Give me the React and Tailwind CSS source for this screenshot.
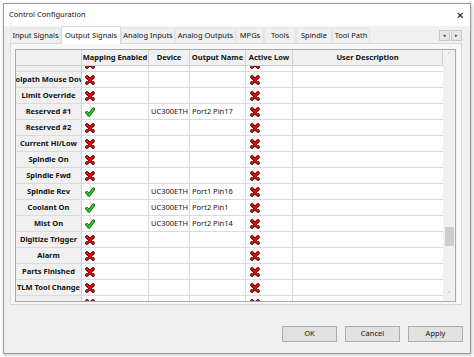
import React from "react";

const tabs = [
  { label: "Input Signals", w: "w-[51px]" },
  { label: "Output Signals", w: "w-[60px]", active: true },
  { label: "Analog Inputs", w: "w-[54px]" },
  { label: "Analog Outputs", w: "w-[61px]" },
  { label: "MPGs", w: "w-[28px]" },
  { label: "Tools", w: "w-[32px]" },
  { label: "Spindle", w: "w-[36px]" },
  { label: "Tool Path", w: "w-[38px]" },
];

const rows = [
  { name: "Dwell", on: false },
  { name: "Toolpath Mouse Down", on: false },
  { name: "Limit Override", on: false },
  { name: "Reserved #1", on: true, device: "UC300ETH", out: "Port2 Pin17" },
  { name: "Reserved #2", on: false },
  { name: "Current Hi/Low", on: false },
  { name: "Spindle On", on: false },
  { name: "Spindle Fwd", on: false },
  { name: "Spindle Rev", on: true, device: "UC300ETH", out: "Port1 Pin16" },
  { name: "Coolant On", on: true, device: "UC300ETH", out: "Port2 Pin1" },
  { name: "Mist On", on: true, device: "UC300ETH", out: "Port2 Pin14" },
  { name: "Digitize Trigger", on: false },
  { name: "Alarm", on: false },
  { name: "Parts Finished", on: false },
  { name: "TLM Tool Change", on: false },
  { name: "Probe Output", on: false },
];

const RedX = () => (
  <svg width="10" height="10" viewBox="0 0 10 10">
    <path d="M2 2 L8 8 M8 2 L2 8" stroke="#3a0000" strokeWidth="3.6" strokeLinecap="round" />
    <path d="M2 2 L8 8 M8 2 L2 8" stroke="#d81010" strokeWidth="2.2" strokeLinecap="round" />
  </svg>
);

const GreenCheck = () => (
  <svg width="10" height="10" viewBox="0 0 10 10">
    <path d="M1.8 5.6 L4 8 L8.6 2" fill="none" stroke="#0a4a0a" strokeWidth="3.2" strokeLinejoin="round" strokeLinecap="round" />
    <path d="M1.8 5.6 L4 8 L8.6 2" fill="none" stroke="#2fd02f" strokeWidth="1.8" strokeLinejoin="round" strokeLinecap="round" />
  </svg>
);

const Row = ({ r }) => (
  <div className="flex h-[16px] border-b border-[#dadada]">
    <div className="w-[66px] shrink-0 bg-[#f0f0f0] border-r border-[#d0d0d0] flex justify-center items-center overflow-hidden whitespace-nowrap font-bold">
      <span className="shrink-0">{r.name}</span>
    </div>
    <div className="w-[67px] shrink-0 border-r border-[#d8d8d8] flex items-center pl-[3px]">
      {r.on ? <GreenCheck /> : <RedX />}
    </div>
    <div className="w-[41px] shrink-0 border-r border-[#d8d8d8] flex items-center pl-[2px] whitespace-nowrap">{r.device}</div>
    <div className="w-[56px] shrink-0 border-r border-[#d8d8d8] flex items-center pl-[2px] whitespace-nowrap">{r.out}</div>
    <div className="w-[47px] shrink-0 border-r border-[#d8d8d8] flex items-center pl-[4px]">
      <RedX />
    </div>
    <div className="flex-1" />
  </div>
);

export default function App() {
  return (
    <div className="w-[474px] h-[357px] bg-white pt-[3px] pl-[3px] text-[7.5px] text-[#111]" style={{ fontFamily: '"Noto Sans", sans-serif' }}>
      <div className="w-[468px] h-[351px] border border-[#9a9a9a] bg-[#f0f0f0] flex flex-col shadow-[1px_1px_3px_rgba(0,0,0,0.25)]">
        {/* title bar */}
        <div className="h-[22px] bg-white flex items-center justify-between pl-[5px] pr-[6px]">
          <span className="text-[7.5px]">Control Configuration</span>
          <span className="text-[10px] font-light">✕</span>
        </div>

        {/* tabs */}
        <div className="flex items-end h-[17px] pl-[6px] pr-[8px]">
          {tabs.map((t) =>
            t.active ? (
              <div key={t.label} className={`${t.w} h-[18px] bg-white border border-b-0 border-[#d9d9d9] flex items-center justify-center whitespace-nowrap -mb-px relative z-10`}>
                {t.label}
              </div>
            ) : (
              <div key={t.label} className={`${t.w} h-[15px] border-t border-x border-[#e4e4e4] flex items-center justify-center whitespace-nowrap`}>
                {t.label}
              </div>
            )
          )}
          <div className="flex-1" />
          <div className="flex mb-[2px] gap-px">
            <div className="w-[11px] h-[11px] border border-[#c8c8c8] bg-[#e6e6e6] flex items-center justify-center text-[5px] text-[#333]">◂</div>
            <div className="w-[11px] h-[11px] border border-[#c8c8c8] bg-[#e6e6e6] flex items-center justify-center text-[5px] text-[#333]">▸</div>
          </div>
        </div>

        {/* panel */}
        <div className="ml-[6px] w-[452px] h-[262px] border border-[#d9d9d9] bg-[#f7f7f7] pt-[5px] pl-[4px] pr-[5px]">
          <div className="flex h-[253px] border border-[#a8a8a8] bg-white">
            <div className="flex-1 flex flex-col overflow-hidden">
              {/* header */}
              <div className="flex h-[16px] shrink-0 border-b border-[#cfcfcf] bg-[#f0f0f0] font-bold">
                <div className="w-[66px] shrink-0 border-r border-[#d0d0d0]" />
                <div className="w-[67px] shrink-0 border-r border-[#d0d0d0] flex items-center justify-center">Mapping Enabled</div>
                <div className="w-[41px] shrink-0 border-r border-[#d0d0d0] flex items-center justify-center">Device</div>
                <div className="w-[56px] shrink-0 border-r border-[#d0d0d0] flex items-center justify-center whitespace-nowrap">Output Name</div>
                <div className="w-[47px] shrink-0 border-r border-[#d0d0d0] flex items-center justify-center">Active Low</div>
                <div className="flex-1 border-r border-[#d0d0d0] flex items-center justify-center">User Description</div>
              </div>
              {/* scrolled body */}
              <div className="flex-1 overflow-hidden">
                <div className="-mt-[10px]">
                  {rows.map((r) => (
                    <Row key={r.name} r={r} />
                  ))}
                </div>
              </div>
            </div>
            {/* scrollbar */}
            <div className="w-[12px] shrink-0 bg-[#f0f0f0] flex flex-col items-center text-[#606060]">
              <div className="h-[12px] flex items-center justify-center text-[7px]">˄</div>
              <div className="flex-1 w-full relative">
                <div className="absolute left-[2px] top-[165px] w-[9px] h-[19px] bg-[#cdcdcd]" />
              </div>
              <div className="h-[12px] flex items-center justify-center text-[7px]">˅</div>
            </div>
          </div>
        </div>

        {/* buttons */}
        <div className="flex justify-end gap-[8px] pr-[7px] mt-[21px]">
          {["OK", "Cancel", "Apply"].map((b) => (
            <div key={b} className="w-[55px] h-[16px] border border-[#adadad] bg-[#e1e1e1] flex items-center justify-center text-[7.5px]">
              {b}
            </div>
          ))}
        </div>
      </div>
    </div>
  );
}
